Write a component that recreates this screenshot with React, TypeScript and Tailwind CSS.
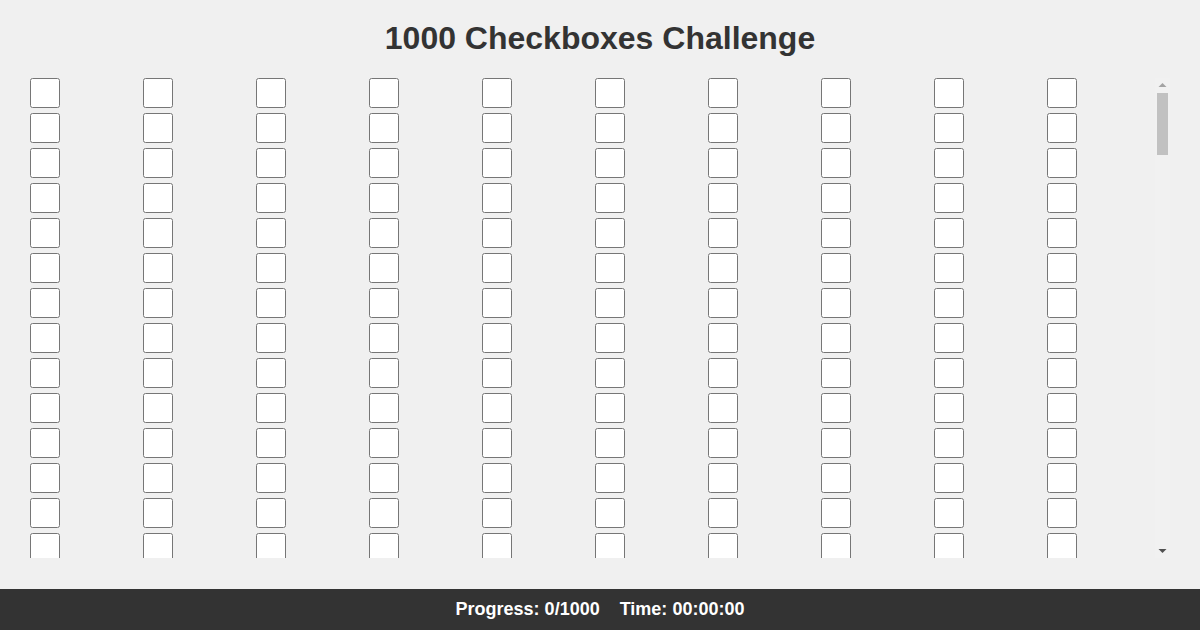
import React, { useEffect, useRef, useState } from 'react';

const TOTAL = 1000;
const ARROW = 15;

function pad(n: number) {
  return n.toString().padStart(2, '0');
}

function ScrollArrow({ dir, disabled, onClick }: { dir: 'up' | 'down'; disabled: boolean; onClick: () => void }) {
  return (
    <button onClick={onClick} className="h-[15px] w-[15px] flex items-center justify-center shrink-0">
      <svg width="15" height="15" viewBox="0 0 15 15">
        {dir === 'up' ? (
          <path d="M3.5 9h8L7.5 5z" fill={disabled ? '#a3a3a3' : '#505050'} />
        ) : (
          <path d="M3.5 6h8L7.5 10z" fill={disabled ? '#a3a3a3' : '#505050'} />
        )}
      </svg>
    </button>
  );
}

export default function App() {
  const [checked, setChecked] = useState<boolean[]>(() => Array(TOTAL).fill(false));
  const [seconds, setSeconds] = useState(0);
  const [started, setStarted] = useState(false);
  const listRef = useRef<HTMLDivElement>(null);
  const [scroll, setScroll] = useState({ top: 0, height: 1, view: 1 });

  const done = checked.filter(Boolean).length;

  useEffect(() => {
    if (!started || done === TOTAL) return;
    const id = setInterval(() => setSeconds((s) => s + 1), 1000);
    return () => clearInterval(id);
  }, [started, done]);

  function measure() {
    const el = listRef.current;
    if (!el) return;
    setScroll({ top: el.scrollTop, height: el.scrollHeight, view: el.clientHeight });
  }

  useEffect(() => {
    measure();
    window.addEventListener('resize', measure);
    return () => window.removeEventListener('resize', measure);
  }, []);

  function toggle(i: number) {
    if (!started) setStarted(true);
    setChecked((prev) => {
      const next = [...prev];
      next[i] = !next[i];
      return next;
    });
  }

  function step(delta: number) {
    listRef.current?.scrollBy({ top: delta });
  }

  const track = scroll.view - ARROW * 2;
  const thumbH = Math.max(20, (track * scroll.view) / scroll.height);
  const maxTop = Math.max(1, scroll.height - scroll.view);
  const thumbTop = ((track - thumbH) * scroll.top) / maxTop;

  const time = `${pad(Math.floor(seconds / 3600))}:${pad(Math.floor((seconds % 3600) / 60))}:${pad(seconds % 60)}`;

  return (
    <div className="h-screen flex flex-col bg-[#f0f0f0] font-['Liberation_Sans',Arial,sans-serif] text-[#333]">
      <h1 className="m-0 pt-5 mb-[21px] text-center text-[32px] leading-[1.15] font-bold">
        1000 Checkboxes Challenge
      </h1>

      <div className="mx-[30px] h-[480px] flex">
        <div
          ref={listRef}
          onScroll={measure}
          className="flex-1 overflow-y-auto [scrollbar-width:none] [&::-webkit-scrollbar]:hidden"
        >
          <div className="grid grid-cols-10 gap-[5px]">
            {checked.map((value, i) => (
              <input
                key={i}
                type="checkbox"
                checked={value}
                onChange={() => toggle(i)}
                className="m-0 w-[30px] h-[30px] cursor-pointer"
              />
            ))}
          </div>
        </div>

        {/* scrollbar */}
        <div className="w-[15px] bg-[#f1f1f1] flex flex-col">
          <ScrollArrow dir="up" disabled={scroll.top <= 0} onClick={() => step(-40)} />
          <div className="flex-1 px-[2px]">
            <div className="bg-[#c1c1c1]" style={{ marginTop: thumbTop, height: thumbH }} />
          </div>
          <ScrollArrow dir="down" disabled={scroll.top >= maxTop} onClick={() => step(40)} />
        </div>
      </div>

      <footer className="mt-auto bg-[#333] text-white text-center py-[10px] text-lg leading-[1.15] font-bold">
        <span className="mx-[10px]">Progress: {done}/{TOTAL}</span>
        <span className="mx-[10px]">Time: {time}</span>
      </footer>
    </div>
  );
}
